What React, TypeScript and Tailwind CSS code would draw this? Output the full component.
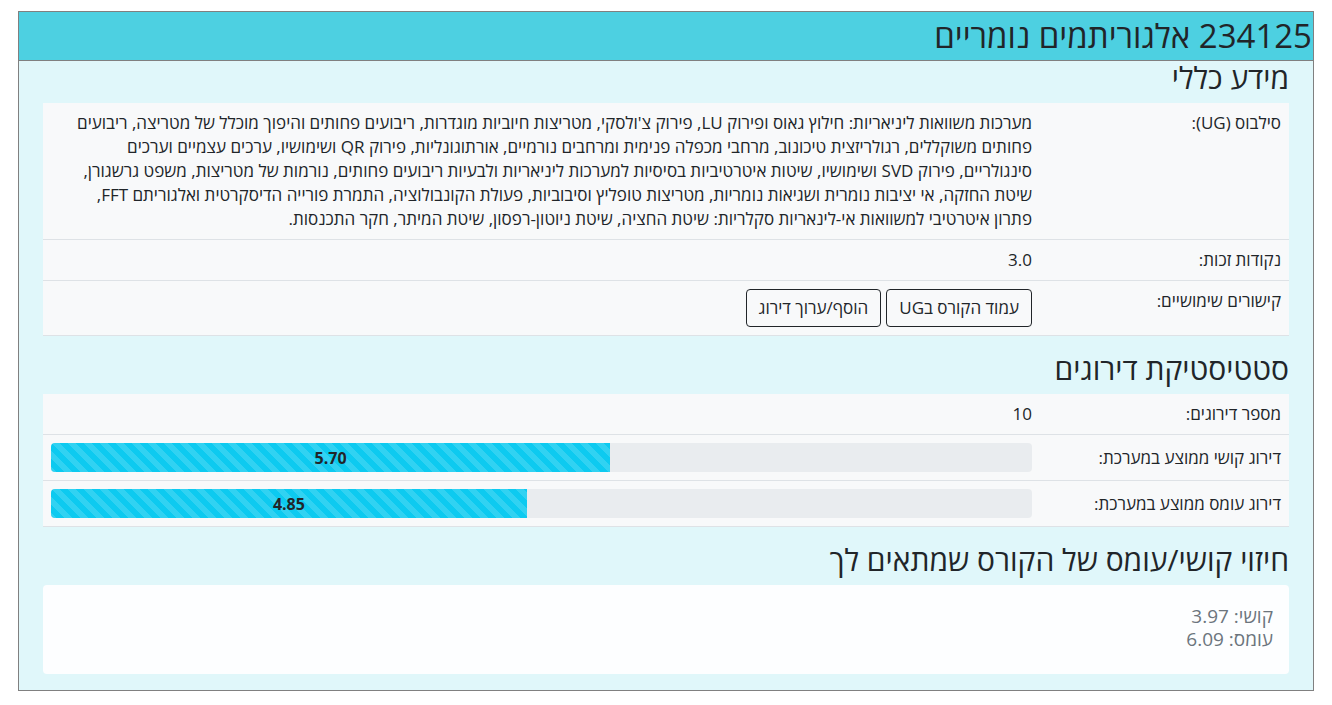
import React from "react";

const font = { fontFamily: '"Open Sans", "Liberation Sans", "DejaVu Sans", sans-serif' };

function Row({ label, children, className = "" }: { label: string; children: React.ReactNode; className?: string }) {
  return (
    <div className={"flex border-b border-[#dee2e6] " + className}>
      <div className="w-[249px] shrink-0 px-2 py-2 leading-6">{label}</div>
      <div className="flex-1 px-2 py-2 leading-6">{children}</div>
    </div>
  );
}

function Bar({ value }: { value: number }) {
  return (
    <div dir="ltr" className="flex h-[29px] w-full overflow-hidden rounded bg-[#e9ecef]">
      <div
        className="flex items-center justify-center bg-[#0dcaf0] bg-[linear-gradient(45deg,rgba(255,255,255,.15)_25%,transparent_25%,transparent_50%,rgba(255,255,255,.15)_50%,rgba(255,255,255,.15)_75%,transparent_75%,transparent)] bg-size-[16px_16px] text-[16px] font-bold text-[#212529]"
        style={{ width: `${value * 10}%` }}
      >
        {value.toFixed(2)}
      </div>
    </div>
  );
}

export default function App() {
  return (
    <div dir="rtl" style={font} className="bg-white pt-[11px] pb-[13px] text-[#212529]">
      <div className="mr-[18px] w-[1296px] border border-[#808080] bg-[#e0f7fa]">
        <div className="h-[49px] border-b border-[#808080] bg-[#4dd0e1] pr-[1px] text-[33px] leading-[48px] text-[#212529]">
          234125 אלגוריתמים נומריים
        </div>
        <div className="px-6 pb-4">
          <h2 className="mb-2 text-[30px] leading-[34px]">מידע כללי</h2>
          <div className="mb-4 bg-[#f8f9fa] text-[17px]">
            <Row label="סילבוס (UG):">
              מערכות משוואות ליניאריות: חילוץ גאוס ופירוק LU, פירוק צ'ולסקי, מטריצות חיוביות מוגדרות, ריבועים פחותים והיפוך מוכלל של מטריצה, ריבועים פחותים משוקללים, רגולריזצית טיכונוב, מרחבי מכפלה פנימית ומרחבים נורמיים, אורתוגונליות, פירוק QR ושימושיו, ערכים עצמיים וערכים סינגולריים, פירוק SVD ושימושיו, שיטות איטרטיביות בסיסיות למערכות ליניאריות ולבעיות ריבועים פחותים, נורמות של מטריצות, משפט גרשגורן, שיטת החזקה, אי יציבות נומרית ושגיאות נומריות, מטריצות טופליץ וסיבוביות, פעולת הקונבולוציה, התמרת פורייה הדיסקרטית ואלגוריתם FFT,
              <br />
              פתרון איטרטיבי למשוואות אי-לינאריות סקלריות: שיטת החציה, שיטת ניוטון-רפסון, שיטת המיתר, חקר התכנסות.
            </Row>
            <Row label="נקודות זכות:">3.0</Row>
            <Row label="קישורים שימושיים:">
              <div className="flex gap-[5px]">
                <button className="rounded border border-[#212529] px-3 py-[6px] text-[17px] leading-6">עמוד הקורס בUG</button>
                <button className="rounded border border-[#212529] px-3 py-[6px] text-[17px] leading-6">הוסף/ערוך דירוג</button>
              </div>
            </Row>
          </div>

          <h2 className="mb-2 text-[30px] leading-[34px]">סטטיסטיקת דירוגים</h2>
          <div className="mb-4 bg-[#f8f9fa] text-[17px]">
            <Row label="מספר דירוגים:">10</Row>
            <Row label="דירוג קושי ממוצע במערכת:" className="items-center">
              <Bar value={5.7} />
            </Row>
            <Row label="דירוג עומס ממוצע במערכת:" className="items-center">
              <Bar value={4.85} />
            </Row>
          </div>

          <h2 className="mb-2 text-[30px] leading-[34px]">חיזוי קושי/עומס של הקורס שמתאים לך</h2>
          <div className="rounded bg-[#fdfeff] px-4 pt-[20px] pb-[23px] text-[19px] leading-[23px] text-[#6c757d]">
            <div>קושי: 3.97</div>
            <div>עומס: 6.09</div>
          </div>
        </div>
      </div>
    </div>
  );
}
